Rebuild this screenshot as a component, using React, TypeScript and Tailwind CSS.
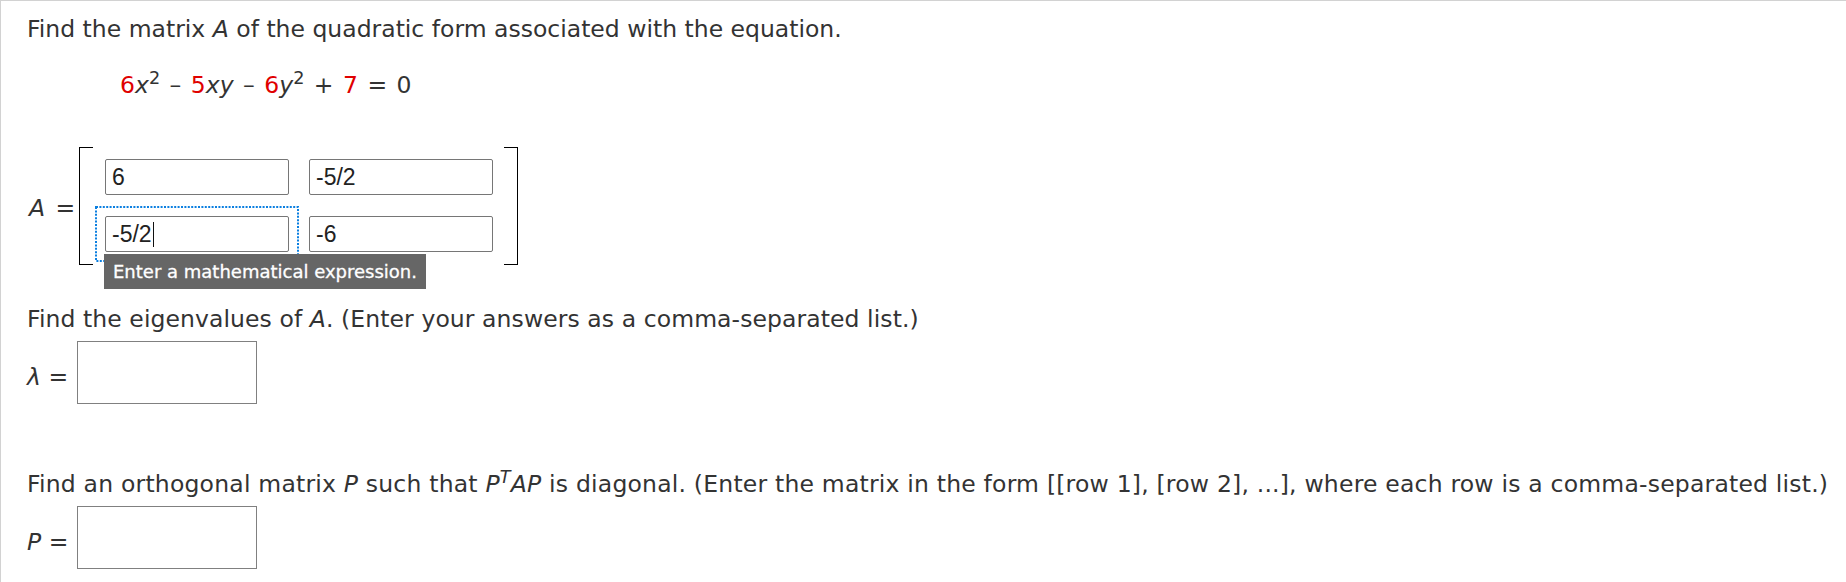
import React from 'react';

const red = 'text-[#e00000]';

function Cell({ value, focused }: { value: string; focused?: boolean }) {
    return (
        <div className="relative h-[36px] w-[184px]">
            {focused && (
                <svg
                    className="pointer-events-none absolute left-[-10px] top-[-10px]"
                    width="204"
                    height="56"
                >
                    <rect
                        x="1"
                        y="1"
                        width="202"
                        height="54"
                        fill="none"
                        stroke="#0b7fe0"
                        strokeWidth="2"
                        strokeDasharray="2 1.4"
                    />
                </svg>
            )}
            <div className="relative flex h-full w-full items-center rounded-[2px] border border-[#767676] bg-white pl-[6px] font-['Liberation_Sans',Arial,sans-serif] text-[23px] text-[#222]">
                {value}
                {focused && <span className="ml-[1px] inline-block h-[25px] w-px bg-[#111]"></span>}
            </div>
            {focused && (
                <div className="absolute left-[-1px] top-[calc(100%+2px)] z-10 whitespace-nowrap bg-[#666666] px-[9px] py-[7px] text-[18px] leading-[21px] text-white [-webkit-text-stroke:0.3px_#fff]">
                    Enter a mathematical expression.
                </div>
            )}
        </div>
    );
}

export default function App() {
    return (
        <div className="h-[582px] w-full overflow-hidden border-l border-t border-[#d2d2d2] bg-white pl-[26px] pt-[14px] font-['DejaVu_Sans',Verdana,sans-serif] text-[23.5px] leading-[28px] text-[#333]">
            <p>
                Find the matrix <i>A</i> of the quadratic form associated with the equation.
            </p>

            {/* ecuación */}
            <p className="mt-[28px] pl-[93px]">
                <span className={red}>6</span>
                <i>x</i>
                <sup>2</sup>
                <span className="mx-[2px]"> – </span>
                <span className={red}>5</span>
                <i>xy</i>
                <span className="mx-[2px]"> – </span>
                <span className={red}>6</span>
                <i>y</i>
                <sup>2</sup>
                <span className="mx-[2px]"> + </span>
                <span className={red}>7</span>
                <span className="mx-[2px]"> = </span>0
            </p>

            {/* matriz A */}
            <div className="mt-[48px] flex items-center">
                <div className="w-[52px] pl-[2px] pt-[4px]">
                    <i>A</i>
                    <span className="ml-[3px]"> =</span>
                </div>
                <div className="flex">
                    <div className="w-[14px] border-y border-l border-black"></div>
                    <div className="grid grid-cols-[184px_184px] content-start gap-x-[20px] gap-y-[21px] pb-[13px] pl-[12px] pr-[11px] pt-[12px]">
                        <Cell value="6" />
                        <Cell value="-5/2" />
                        <Cell value="-5/2" focused />
                        <Cell value="-6" />
                    </div>
                    <div className="w-[14px] border-y border-r border-black"></div>
                </div>
            </div>

            <p className="mt-[40px] tracking-[0.08px]">
                Find the eigenvalues of <i>A</i>. (Enter your answers as a comma-separated list.)
            </p>
            <div className="mt-[8px] flex items-center">
                <div className="w-[50px] pt-[9px]">
                    <i>λ</i> =
                </div>
                <div className="h-[63px] w-[180px] border border-[#808080] bg-white"></div>
            </div>

            <p className="mt-[66px] tracking-[0.2px]">
                Find an orthogonal matrix <i>P</i> such that <i>P</i>
                <sup>
                    <i>T</i>
                </sup>
                <i>AP</i> is diagonal. (Enter the matrix in the form [[row 1], [row 2], ...], where each row
                is a comma-separated list.)
            </p>
            <div className="mt-[8px] flex items-center">
                <div className="w-[50px] pt-[9px]">
                    <i>P</i> =
                </div>
                <div className="h-[63px] w-[180px] border border-[#808080] bg-white"></div>
            </div>
        </div>
    );
}
